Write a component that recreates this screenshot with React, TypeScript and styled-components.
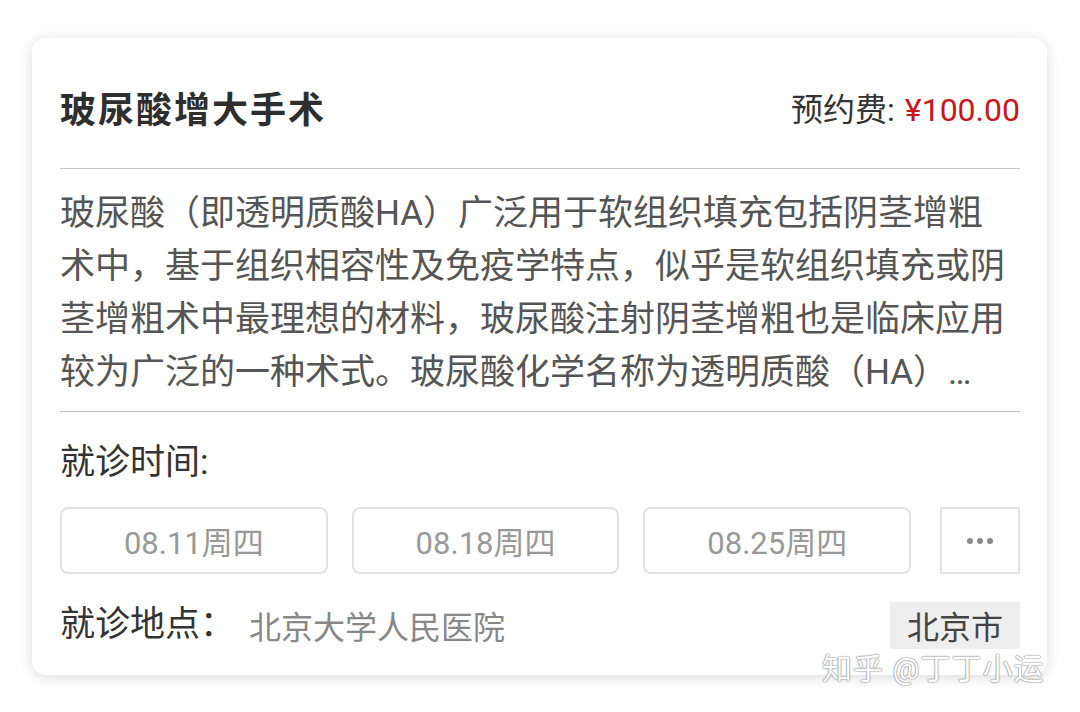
import React from 'react';
import styled, { createGlobalStyle } from 'styled-components';

const GlobalStyle = createGlobalStyle`
  html, body {
    margin: 0;
    padding: 0;
    background: #ffffff;
  }
  body {
    font-family: Roboto, "Noto Sans CJK SC", "Noto Sans", sans-serif;
  }
`;

const Page = styled.div`
  position: relative;
  width: 1080px;
  height: 712px;
  padding: 38px 33px 0 32px;
  box-sizing: border-box;
  background: #fff;
`;

const Card = styled.div`
  background: #fff;
  border-radius: 14px;
  box-shadow: 0 2px 14px rgba(0, 0, 0, 0.14);
  padding: 0 27px 25px 28px;
  display: flex;
  flex-direction: column;
`;

const Header = styled.div`
  height: 130px;
  padding-top: 8px;
  box-sizing: border-box;
  display: flex;
  align-items: center;
  justify-content: space-between;
`;

const Title = styled.h1`
  margin: 0;
  font-size: 36px;
  font-weight: 700;
  letter-spacing: 2px;
  color: #2e2e2e;
`;

const Fee = styled.div`
  font-size: 32px;
  color: #333;
  display: flex;
  align-items: baseline;
  gap: 10px;
`;

const Price = styled.span`
  color: #c9151e;
`;

const Divider = styled.div`
  height: 1px;
  background: #c4c4c4;
`;

const Description = styled.div`
  margin: 18px 0 12px;
  font-size: 35px;
  line-height: 53px;
  color: #555;
`;

const Line = styled.div`
  white-space: nowrap;
`;

const Label = styled.div`
  font-size: 35px;
  line-height: 50px;
  color: #333;
`;

const TimeLabel = styled(Label)`
  margin-top: 26px;
`;

const Dates = styled.div`
  margin-top: 19px;
  display: flex;
  gap: 24px;
`;

const DateBox = styled.div`
  width: 268px;
  height: 67px;
  box-sizing: border-box;
  border: 2px solid #e2e2e2;
  border-radius: 8px;
  display: flex;
  align-items: center;
  justify-content: center;
  font-size: 31px;
  color: #999;
`;

const MoreBox = styled.div`
  margin-left: 5px;
  width: 80px;
  height: 67px;
  box-sizing: border-box;
  border: 2px solid #e2e2e2;
  display: flex;
  align-items: center;
  justify-content: center;
  gap: 4px;
`;

const Dot = styled.span`
  width: 6px;
  height: 6px;
  border-radius: 50%;
  background: #8a8a8a;
`;

const LocationRow = styled.div`
  margin-top: 26px;
  display: flex;
  align-items: center;
`;

const Place = styled.span`
  font-size: 32px;
  color: #888;
  margin-left: 14px;
  flex: 1;
`;

const Tag = styled.span`
  height: 47px;
  padding: 0 17px;
  display: flex;
  align-items: center;
  background: #eeeeee;
  font-size: 32px;
  color: #444;
`;

const Watermark = styled.div`
  position: absolute;
  left: 822px;
  top: 644px;
  font-size: 30px;
  color: #fff;
  letter-spacing: 1px;
  text-shadow: 0 0 1px #888, 0 0 1px #888, 0 0 2px #999;
`;

const lines = [
  '玻尿酸（即透明质酸HA）广泛用于软组织填充包括阴茎增粗',
  '术中，基于组织相容性及免疫学特点，似乎是软组织填充或阴',
  '茎增粗术中最理想的材料，玻尿酸注射阴茎增粗也是临床应用',
  '较为广泛的一种术式。玻尿酸化学名称为透明质酸（HA）…',
];

const dates = ['08.11周四', '08.18周四', '08.25周四'];

export default function App() {
  return (
    <Page>
      <GlobalStyle />
      <Card>
        <Header>
          <Title>玻尿酸增大手术</Title>
          <Fee>
            <span>预约费:</span>
            <Price>¥100.00</Price>
          </Fee>
        </Header>
        <Divider />
        <Description>
          {lines.map((l) => (
            <Line key={l}>{l}</Line>
          ))}
        </Description>
        <Divider />
        <TimeLabel>就诊时间:</TimeLabel>
        <Dates>
          {dates.map((d) => (
            <DateBox key={d}>{d}</DateBox>
          ))}
          <MoreBox>
            <Dot />
            <Dot />
            <Dot />
          </MoreBox>
        </Dates>
        <LocationRow>
          <Label>就诊地点：</Label>
          <Place>北京大学人民医院</Place>
          <Tag>北京市</Tag>
        </LocationRow>
      </Card>
      <Watermark>知乎 @丁丁小运</Watermark>
    </Page>
  );
}
